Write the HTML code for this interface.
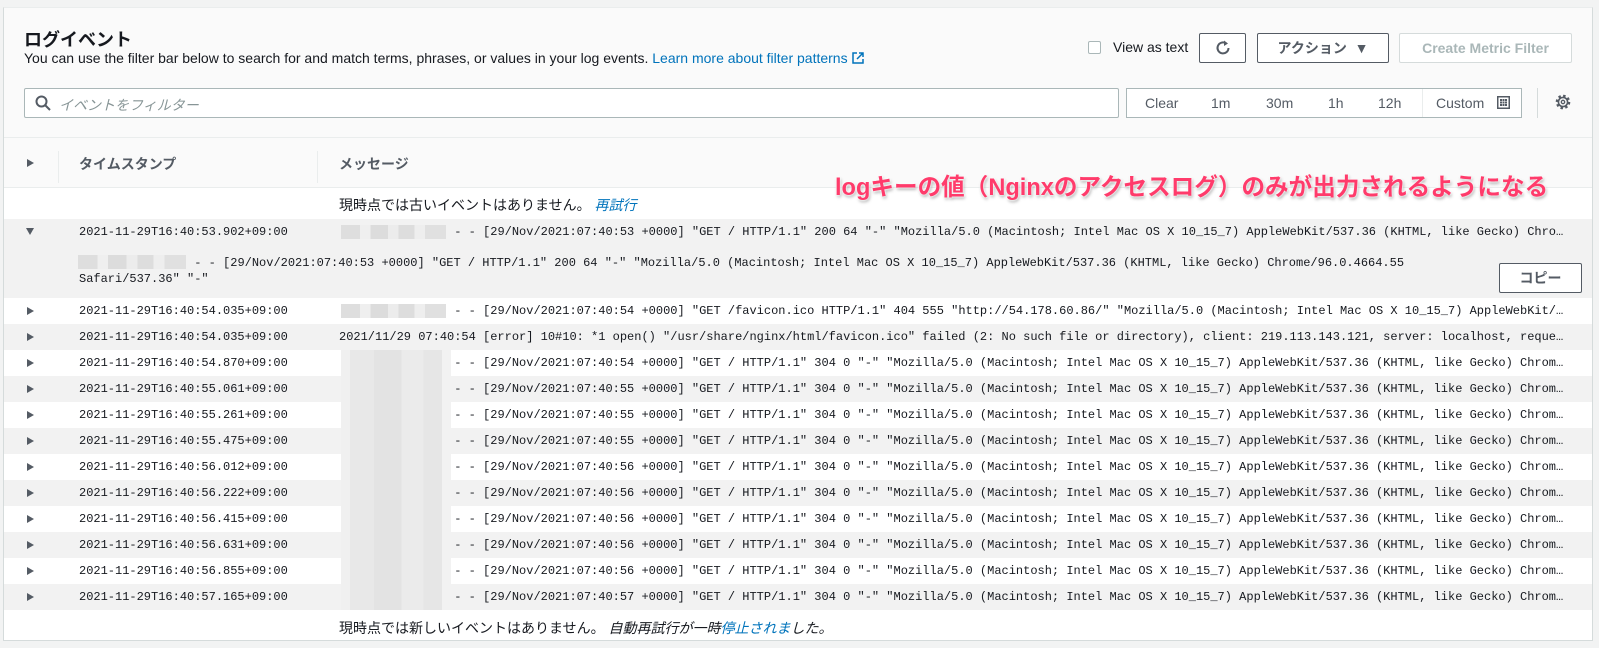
<!DOCTYPE html>
<html><head><meta charset="utf-8">
<style>
*{box-sizing:border-box;margin:0;padding:0}
body{width:1599px;height:648px;background:#f2f3f3;font-family:"Liberation Sans","Noto Sans CJK JP",sans-serif;color:#16191f;position:relative;overflow:hidden}
.panel{position:absolute;left:3px;top:7px;width:1590px;height:634px;background:#fff;border:1px solid #d5dbdb;border-top-color:#eaeded}
.top{position:absolute;left:0;top:0;width:100%;height:130px;background:#fafafa;border-bottom:1px solid #eaeded}
.abs{position:absolute}
.mono{font-family:"Liberation Mono","DejaVu Sans Mono",monospace;font-size:12px;white-space:nowrap}
.btn{position:absolute;border:1px solid #545b64;border-radius:2px;background:#fff;display:flex;align-items:center;justify-content:center;font-size:14px;font-weight:bold;color:#545b64}
.row{position:absolute;left:0;width:100%;height:26px}
.g{background:#f2f2f2}
.tri{position:absolute;left:23px;top:9px;width:0;height:0;border-left:7px solid #545b64;border-top:4px solid transparent;border-bottom:4px solid transparent}
.ts{position:absolute;left:75px;top:6px}
.msg{position:absolute;left:335px;top:6px;width:1230px;overflow:hidden;text-overflow:ellipsis}
.blur{position:absolute;left:337px;top:0;width:110px;height:26px;background:linear-gradient(90deg,#f0f0f0 0 8%,#e8e8e8 8% 30%,#e3e3e3 30% 55%,#ebebeb 55% 75%,#e6e6e6 75% 92%,#f2f2f2 92%)}
.bl{position:absolute;top:6px;height:14px;background:linear-gradient(90deg,#dedede 0 18%,#efefef 18% 28%,#dcdcdc 28% 45%,#ececec 45% 55%,#dddddd 55% 70%,#eeeeee 70% 80%,#e0e0e0 80%)}
</style></head><body>
<div class="panel">
 <div class="top"></div>
 <div class="abs" style="left:20px;top:18px;font-size:18px;font-weight:bold">ログイベント</div>
 <div class="abs" style="left:20px;top:42px;font-size:14px">You can use the filter bar below to search for and match terms, phrases, or values in your log events. <span style="color:#0073bb">Learn more about filter patterns <svg width="12" height="12" viewBox="0 0 12 12" style="vertical-align:-1px"><path d="M5 1H1v10h10V7M7 1h4v4M11 1L5 7" fill="none" stroke="#0073bb" stroke-width="1.5"/></svg></span></div>
 <div class="abs" style="left:1084px;top:33px;width:13px;height:13px;border:1px solid #aab7b8;border-radius:2px;background:#fff"></div>
 <div class="abs" style="left:1109px;top:31px;font-size:14px">View as text</div>
 <div class="btn" style="left:1195px;top:25px;width:47px;height:30px"><svg width="18" height="18" viewBox="0 0 18 18"><path d="M14.5 9A5.5 5.5 0 1 1 12 4.3" fill="none" stroke="#545b64" stroke-width="2"/><path d="M10 1.5l4 3-4 2.5z" fill="#545b64"/></svg></div>
 <div class="btn" style="left:1253px;top:25px;width:132px;height:30px">アクション&nbsp;&nbsp;▼</div>
 <div class="btn" style="left:1395px;top:25px;width:173px;height:30px;border-color:#d5dbdb;color:#aab7b8">Create Metric Filter</div>
 <div class="abs" style="left:20px;top:80px;width:1095px;height:30px;border:1px solid #aab7b8;border-radius:2px;background:#fff">
  <svg class="abs" style="left:10px;top:6px" width="16" height="16" viewBox="0 0 16 16"><circle cx="6.5" cy="6.5" r="5" fill="none" stroke="#545b64" stroke-width="2"/><path d="M10 10l5 5" stroke="#545b64" stroke-width="2"/></svg>
  <span class="abs" style="left:34px;top:6px;font-size:14px;color:#879596;font-style:italic">イベントをフィルター</span>
 </div>
 <div class="abs" style="left:1122px;top:80px;width:396px;height:30px;border:1px solid #aab7b8;background:#fff;font-size:14px;color:#545b64">
  <span class="abs" style="left:18px;top:6px">Clear</span>
  <span class="abs" style="left:84px;top:6px">1m</span>
  <span class="abs" style="left:139px;top:6px">30m</span>
  <span class="abs" style="left:201px;top:6px">1h</span>
  <span class="abs" style="left:251px;top:6px">12h</span>
  <div class="abs" style="left:295px;top:0;width:1px;height:28px;background:#eaeded"></div>
  <span class="abs" style="left:309px;top:6px">Custom</span>
  <svg class="abs" style="left:370px;top:7px" width="13" height="13" viewBox="0 0 13 13"><rect x="0.75" y="0.75" width="11.5" height="11.5" fill="none" stroke="#545b64" stroke-width="1.5"/><g fill="#545b64"><rect x="3" y="3" width="2" height="2"/><rect x="5.5" y="3" width="2" height="2"/><rect x="8" y="3" width="2" height="2"/><rect x="3" y="5.5" width="2" height="2"/><rect x="5.5" y="5.5" width="2" height="2"/><rect x="8" y="5.5" width="2" height="2"/><rect x="3" y="8" width="2" height="2"/><rect x="5.5" y="8" width="2" height="2"/><rect x="8" y="8" width="2" height="2"/></g></svg>
 </div>
 <div class="abs" style="left:1533px;top:80px;width:1px;height:30px;background:#d5dbdb"></div>
 <svg class="abs" style="left:1550px;top:85px" width="18" height="18" viewBox="0 0 18 18"><circle cx="9" cy="9" r="6" fill="none" stroke="#545b64" stroke-width="2.6" stroke-dasharray="2.4 2.3"/><circle cx="9" cy="9" r="4.6" fill="none" stroke="#545b64" stroke-width="1.6"/><circle cx="9" cy="9" r="1.7" fill="none" stroke="#545b64" stroke-width="1.3"/></svg>
 <div class="abs" style="left:0;top:130px;width:100%;height:50px;background:#fafafa;border-bottom:1px solid #eaeded"></div>
 <div class="tri" style="top:151px;left:23px"></div>
 <div class="abs" style="left:54px;top:143px;width:1px;height:32px;background:#eaeded"></div>
 <div class="abs" style="left:75px;top:146px;font-size:14px;font-weight:bold;color:#545b64">タイムスタンプ</div>
 <div class="abs" style="left:313px;top:143px;width:1px;height:32px;background:#eaeded"></div>
 <div class="abs" style="left:335px;top:146px;font-size:14px;font-weight:bold;color:#545b64">メッセージ</div>
 <div class="abs" style="left:335px;top:187px;font-size:14px">現時点では古いイベントはありません。 <i style="color:#0073bb">再試行</i></div>
 <div class="abs" style="left:831px;top:160px;font-size:23.6px;font-weight:bold;color:#ff3b6b;text-shadow:0 0 2px #fff,0 0 2px #fff,1px 2px 3px rgba(0,0,0,.35);white-space:nowrap">logキーの値（Nginxのアクセスログ）のみが出力されるようになる</div>
 <div class="row g" style="top:211px;height:79px"></div>
 <div class="abs" style="left:22px;top:220px;width:0;height:0;border-top:7px solid #545b64;border-left:4px solid transparent;border-right:4px solid transparent"></div>
 <div class="mono abs" style="left:75px;top:217px">2021-11-29T16:40:53.902+09:00</div>
 <div class="bl" style="left:337px;top:217px;width:105px"></div>
 <div class="mono abs" style="left:335px;top:217px;width:1230px;overflow:hidden;text-overflow:ellipsis"><span style="visibility:hidden">xxxxxxxxxxxxxxx</span> - - [29/Nov/2021:07:40:53 +0000] "GET / HTTP/1.1" 200 64 "-" "Mozilla/5.0 (Macintosh; Intel Mac OS X 10_15_7) AppleWebKit/537.36 (KHTML, like Gecko) Chrome/96.0.4664.55 Safari/537.36"</div>
 <div class="bl" style="left:74px;top:247px;width:108px"></div>
 <div class="mono abs" style="left:75px;top:247px;line-height:16px;white-space:pre"><span style="visibility:hidden">xxxxxxxxxxxxxxx</span> - - [29/Nov/2021:07:40:53 +0000] "GET / HTTP/1.1" 200 64 "-" "Mozilla/5.0 (Macintosh; Intel Mac OS X 10_15_7) AppleWebKit/537.36 (KHTML, like Gecko) Chrome/96.0.4664.55
Safari/537.36" "-"</div>
 <div class="btn" style="left:1495px;top:255px;width:83px;height:30px;border-color:#545b64">コピー</div>
 <div class="row" style="top:290px"><div class="tri"></div><div class="mono ts">2021-11-29T16:40:54.035+09:00</div><div class="bl" style="left:337px;width:105px"></div><div class="mono msg"><span style="visibility:hidden">xxxxxxxxxxxxxxx</span> - - [29/Nov/2021:07:40:54 +0000] "GET /favicon.ico HTTP/1.1" 404 555 "http://54.178.60.86/" "Mozilla/5.0 (Macintosh; Intel Mac OS X 10_15_7) AppleWebKit/537.36 (KHTML, like Gecko) Chrome</div></div>
 <div class="row g" style="top:316px"><div class="tri"></div><div class="mono ts">2021-11-29T16:40:54.035+09:00</div><div class="mono msg">2021/11/29 07:40:54 [error] 10#10: *1 open() "/usr/share/nginx/html/favicon.ico" failed (2: No such file or directory), client: 219.113.143.121, server: localhost, request: "GET"</div></div>
 <div class="row" style="top:342px"><div class="tri"></div><div class="mono ts">2021-11-29T16:40:54.870+09:00</div><div class="blur"></div><div class="mono msg"><span style="visibility:hidden">xxxxxxxxxxxxxxx</span> - - [29/Nov/2021:07:40:54 +0000] "GET / HTTP/1.1" 304 0 "-" "Mozilla/5.0 (Macintosh; Intel Mac OS X 10_15_7) AppleWebKit/537.36 (KHTML, like Gecko) Chrome/96.0</div></div>
 <div class="row g" style="top:368px"><div class="tri"></div><div class="mono ts">2021-11-29T16:40:55.061+09:00</div><div class="blur"></div><div class="mono msg"><span style="visibility:hidden">xxxxxxxxxxxxxxx</span> - - [29/Nov/2021:07:40:55 +0000] "GET / HTTP/1.1" 304 0 "-" "Mozilla/5.0 (Macintosh; Intel Mac OS X 10_15_7) AppleWebKit/537.36 (KHTML, like Gecko) Chrome/96.0</div></div>
 <div class="row" style="top:394px"><div class="tri"></div><div class="mono ts">2021-11-29T16:40:55.261+09:00</div><div class="blur"></div><div class="mono msg"><span style="visibility:hidden">xxxxxxxxxxxxxxx</span> - - [29/Nov/2021:07:40:55 +0000] "GET / HTTP/1.1" 304 0 "-" "Mozilla/5.0 (Macintosh; Intel Mac OS X 10_15_7) AppleWebKit/537.36 (KHTML, like Gecko) Chrome/96.0</div></div>
 <div class="row g" style="top:420px"><div class="tri"></div><div class="mono ts">2021-11-29T16:40:55.475+09:00</div><div class="blur"></div><div class="mono msg"><span style="visibility:hidden">xxxxxxxxxxxxxxx</span> - - [29/Nov/2021:07:40:55 +0000] "GET / HTTP/1.1" 304 0 "-" "Mozilla/5.0 (Macintosh; Intel Mac OS X 10_15_7) AppleWebKit/537.36 (KHTML, like Gecko) Chrome/96.0</div></div>
 <div class="row" style="top:446px"><div class="tri"></div><div class="mono ts">2021-11-29T16:40:56.012+09:00</div><div class="blur"></div><div class="mono msg"><span style="visibility:hidden">xxxxxxxxxxxxxxx</span> - - [29/Nov/2021:07:40:56 +0000] "GET / HTTP/1.1" 304 0 "-" "Mozilla/5.0 (Macintosh; Intel Mac OS X 10_15_7) AppleWebKit/537.36 (KHTML, like Gecko) Chrome/96.0</div></div>
 <div class="row g" style="top:472px"><div class="tri"></div><div class="mono ts">2021-11-29T16:40:56.222+09:00</div><div class="blur"></div><div class="mono msg"><span style="visibility:hidden">xxxxxxxxxxxxxxx</span> - - [29/Nov/2021:07:40:56 +0000] "GET / HTTP/1.1" 304 0 "-" "Mozilla/5.0 (Macintosh; Intel Mac OS X 10_15_7) AppleWebKit/537.36 (KHTML, like Gecko) Chrome/96.0</div></div>
 <div class="row" style="top:498px"><div class="tri"></div><div class="mono ts">2021-11-29T16:40:56.415+09:00</div><div class="blur"></div><div class="mono msg"><span style="visibility:hidden">xxxxxxxxxxxxxxx</span> - - [29/Nov/2021:07:40:56 +0000] "GET / HTTP/1.1" 304 0 "-" "Mozilla/5.0 (Macintosh; Intel Mac OS X 10_15_7) AppleWebKit/537.36 (KHTML, like Gecko) Chrome/96.0</div></div>
 <div class="row g" style="top:524px"><div class="tri"></div><div class="mono ts">2021-11-29T16:40:56.631+09:00</div><div class="blur"></div><div class="mono msg"><span style="visibility:hidden">xxxxxxxxxxxxxxx</span> - - [29/Nov/2021:07:40:56 +0000] "GET / HTTP/1.1" 304 0 "-" "Mozilla/5.0 (Macintosh; Intel Mac OS X 10_15_7) AppleWebKit/537.36 (KHTML, like Gecko) Chrome/96.0</div></div>
 <div class="row" style="top:550px"><div class="tri"></div><div class="mono ts">2021-11-29T16:40:56.855+09:00</div><div class="blur"></div><div class="mono msg"><span style="visibility:hidden">xxxxxxxxxxxxxxx</span> - - [29/Nov/2021:07:40:56 +0000] "GET / HTTP/1.1" 304 0 "-" "Mozilla/5.0 (Macintosh; Intel Mac OS X 10_15_7) AppleWebKit/537.36 (KHTML, like Gecko) Chrome/96.0</div></div>
 <div class="row g" style="top:576px"><div class="tri"></div><div class="mono ts">2021-11-29T16:40:57.165+09:00</div><div class="blur"></div><div class="mono msg"><span style="visibility:hidden">xxxxxxxxxxxxxxx</span> - - [29/Nov/2021:07:40:57 +0000] "GET / HTTP/1.1" 304 0 "-" "Mozilla/5.0 (Macintosh; Intel Mac OS X 10_15_7) AppleWebKit/537.36 (KHTML, like Gecko) Chrome/96.0</div></div>
 <div class="abs" style="left:335px;top:610px;font-size:14px">現時点では新しいイベントはありません。 <i>自動再試行が一時<span style="color:#0073bb">停止されま</span>した。</i></div>
</div>
</body></html>
